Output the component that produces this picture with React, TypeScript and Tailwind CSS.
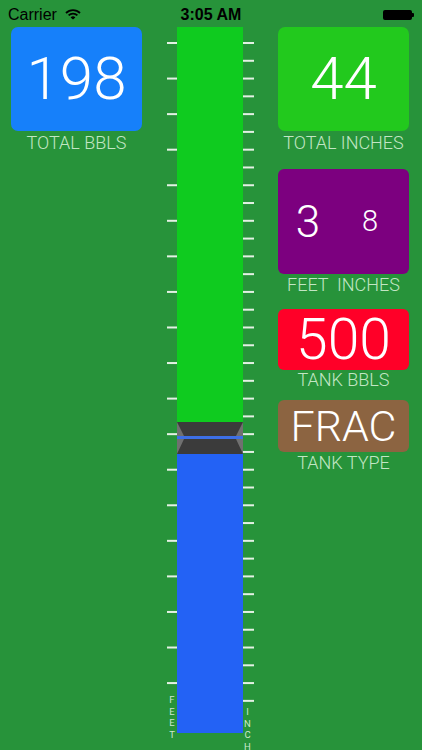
import React from 'react';

const LEFT_TICKS = Array.from({ length: 19 }, (_, i) => 15 + i * 35.56);
const RIGHT_TICKS = Array.from({ length: 38 }, (_, i) => 15 + i * 17.78);

function StatusBar() {
  return (
    <div className="relative flex h-[27px] items-center px-[8px] pt-[2px] text-[16px] text-black [font-family:'Liberation_Sans',Arial,sans-serif]">
      <span>Carrier</span>
      <svg width="16" height="11" viewBox="0 0 16 11" className="ml-[8px]">
        <path d="M1 4 A10 10 0 0 1 15 4" fill="none" stroke="black" strokeWidth="1.8" />
        <path d="M3.6 6.4 A6.4 6.4 0 0 1 12.4 6.4" fill="none" stroke="black" strokeWidth="1.8" />
        <path d="M8 10.5 L5.6 8.4 A3.4 3.4 0 0 1 10.4 8.4 Z" fill="black" />
      </svg>
      <span className="absolute left-0 right-0 text-center font-bold">3:05 AM</span>
      <div className="ml-auto flex items-center">
        <div className="h-[10px] w-[29px] rounded-[2px] bg-black" />
        <div className="h-[4px] w-[2px] rounded-r-[1px] bg-black" />
      </div>
    </div>
  );
}

function Label({ children, h }: { children: React.ReactNode; h: string }) {
  return (
    <div className={`${h} flex items-center justify-center whitespace-pre text-[18px] font-light leading-none text-[#c2e6c4]`}>
      {children}
    </div>
  );
}

function Ticks({ ys, w }: { ys: number[]; w: number }) {
  return (
    <svg width={w} height="706" className="block">
      {ys.map((y, i) => (
        <rect key={i} x="0" y={y} width={w} height="2" fill="#e4f1e4" />
      ))}
    </svg>
  );
}

function Slider() {
  return (
    <svg width="66" height="32" viewBox="0 0 66 32" className="block">
      <rect x="0" y="0" width="66" height="32" fill="#3b3b3b" />
      <polygon points="0,0 7,14 0,14" fill="#707070" />
      <polygon points="66,0 59,14 66,14" fill="#707070" />
      <polygon points="0,17 7,17 0,32" fill="#707070" />
      <polygon points="66,17 59,17 66,32" fill="#707070" />
      <rect x="0" y="14" width="66" height="3" fill="#3d6fe6" />
    </svg>
  );
}

function Gauge() {
  return (
    <div className="ml-[25px] flex">
      <div className="relative w-[10px]">
        <Ticks ys={LEFT_TICKS} w={10} />
        <div className="absolute left-0 top-[667px] w-full text-center text-[9.5px] leading-[11.5px] text-[#cde8cd]">
          <div>F</div>
          <div>E</div>
          <div>E</div>
          <div>T</div>
        </div>
      </div>
      <div className="flex h-[706px] w-[66px] flex-col">
        <div className="h-[395px] bg-[#0fcb1f]" />
        <Slider />
        <div className="flex-1 bg-[#2362f5]" />
      </div>
      <div className="relative w-[11px]">
        <Ticks ys={RIGHT_TICKS} w={11} />
        <div className="absolute left-0 top-[679px] w-full pr-[2px] text-center text-[9.5px] leading-[11.5px] text-[#cde8cd]">
          <div>I</div>
          <div>N</div>
          <div>C</div>
          <div>H</div>
        </div>
      </div>
    </div>
  );
}

export default function App() {
  return (
    <div className="h-[750px] w-[422px] overflow-hidden bg-[#27933a] [font-family:Roboto,'Liberation_Sans',sans-serif]">
      <StatusBar />
      <div className="flex pl-[11px]">
        <div className="w-[131px]">
          <div className="flex h-[104px] items-center justify-center rounded-[7px] bg-[#1680fa] text-[60px] font-light text-white">
            198
          </div>
          <Label h="h-[24px]">TOTAL BBLS</Label>
        </div>

        <Gauge />

        <div className="ml-[24px] w-[131px]">
          <div className="flex h-[104px] items-center justify-center rounded-[7px] bg-[#22c91d] text-[60px] font-light text-white">
            44
          </div>
          <Label h="h-[24px]">TOTAL INCHES</Label>

          <div className="mt-[14px] flex h-[105px] items-center gap-[22px] rounded-[6px] bg-[#7c007f] font-light text-white">
            <span className="ml-[10px] w-[40px] text-center text-[44px]">3</span>
            <span className="w-[40px] text-center text-[29px]">8</span>
          </div>
          <Label h="h-[22px]">{'FEET  INCHES'}</Label>

          <div className="mt-[13px] flex h-[61px] items-center justify-center rounded-[6px] bg-[#ff0028] text-[57px] font-light leading-[57px] text-white">
            500
          </div>
          <Label h="h-[20px]">TANK BBLS</Label>

          <div className="mt-[10px] flex h-[52px] items-center justify-center rounded-[6px] bg-[#8c6441] text-[43px] font-light leading-[43px] text-white">
            FRAC
          </div>
          <Label h="h-[22px]">TANK TYPE</Label>
        </div>
      </div>
    </div>
  );
}
